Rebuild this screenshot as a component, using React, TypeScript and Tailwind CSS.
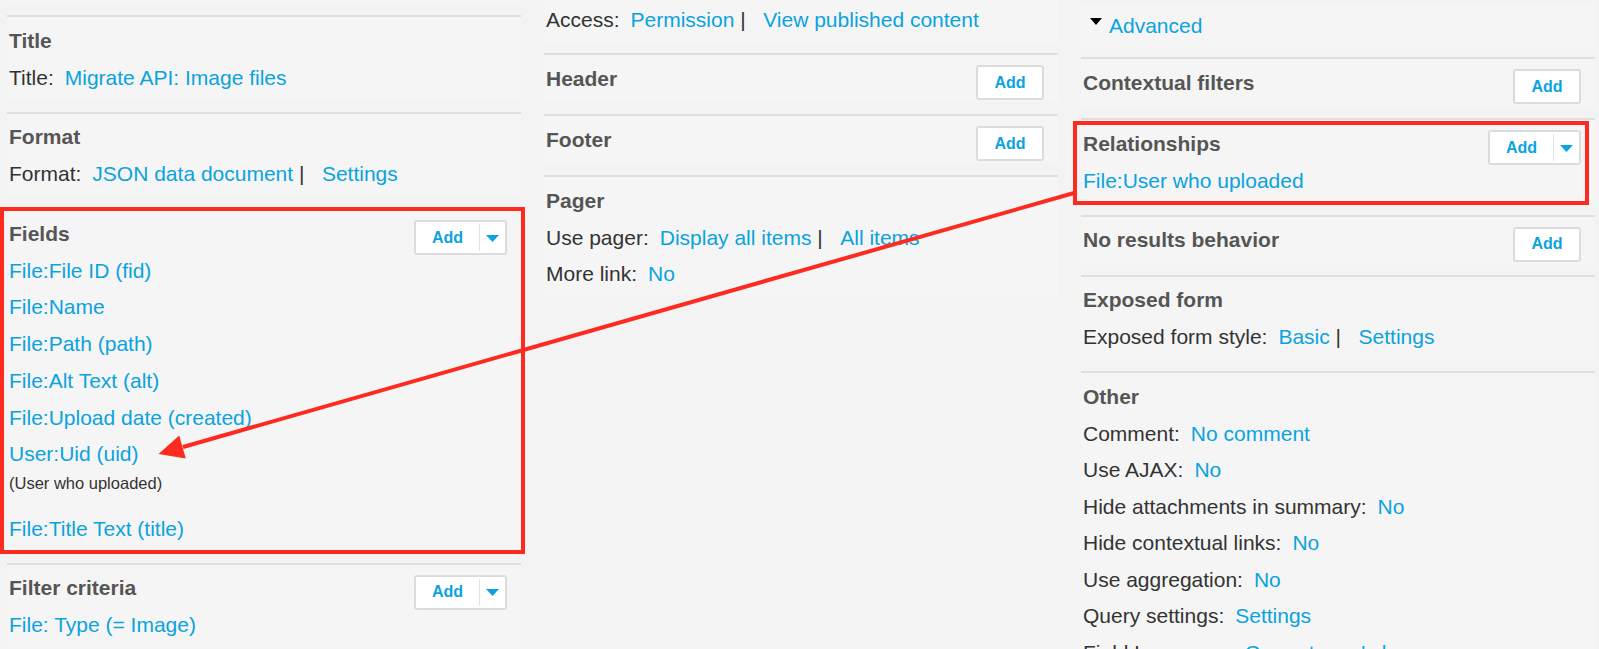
import React from "react";

const BLUE = "text-[#0aa3df]";

function Caret() {
  return (
    <svg width="13" height="7" viewBox="0 0 13 7">
      <polygon points="0,0 13,0 6.5,7" fill="#0aa3df" />
    </svg>
  );
}

function AddButton() {
  return (
    <div className={`mt-[6.5px] flex h-[35px] w-[68px] shrink-0 items-center justify-center rounded-[3px] border-2 border-[#dcdcdc] bg-white text-[16px] font-bold ${BLUE}`}>
      Add
    </div>
  );
}

function SplitButton() {
  return (
    <div className="mt-[6.5px] flex h-[35px] w-[93px] shrink-0 items-stretch rounded-[3px] border-2 border-[#dcdcdc] bg-white">
      <div className={`flex w-[63px] items-center justify-center text-[16px] font-bold ${BLUE}`}>Add</div>
      <div className="my-[2px] w-px bg-[#e3e3e3]" />
      <div className="flex flex-1 items-center justify-center pt-[1px]">
        <Caret />
      </div>
    </div>
  );
}

function Sep() {
  return <span className="text-[#333]">{"\u00a0|\u00a0\u00a0\u00a0"}</span>;
}

function Line({ label, children, lh = "leading-[36.5px]" }: { label?: string; children?: React.ReactNode; lh?: string }) {
  return (
    <div className={`whitespace-nowrap text-[21px] ${lh} text-[#333]`}>
      {label && <span>{label}</span>}
      {label ? <span className="ml-[11px]">{children}</span> : children}
    </div>
  );
}

function L({ children }: { children: React.ReactNode }) {
  return <span className={BLUE}>{children}</span>;
}

function Section({
  title,
  button,
  onlyHeader,
  mb = "mb-[12px]",
  children,
}: {
  title: string;
  button?: "add" | "split";
  onlyHeader?: boolean;
  mb?: string;
  children?: React.ReactNode;
}) {
  return (
    <div
      className={`border-t-2 border-[#dfdfdf] bg-[#f5f5f5] pl-[2px] pr-[14px] pt-[3.5px] ${onlyHeader ? "pb-[4.5px]" : "pb-[3.5px]"} ${mb}`}
    >
      <div className="flex h-[39px] items-start justify-between">
        <div className="whitespace-nowrap text-[21px] font-bold leading-[39px] text-[#555]">{title}</div>
        {button === "add" && <AddButton />}
        {button === "split" && <SplitButton />}
      </div>
      {children}
    </div>
  );
}

export default function App() {
  const fl = "leading-[36.75px]";
  return (
    <div className="relative h-[649px] w-[1599px] overflow-hidden bg-[#f3f3f3] font-['Liberation_Sans',Arial,sans-serif]">
      <div className="ml-[7px] grid grid-cols-[514px_514px_514px] items-start gap-x-[23px]">
        {/* Column 1 */}
        <div>
          <div className="mb-[12px] h-[3px] bg-[#f5f5f5]" />
          <Section title="Title">
            <Line label="Title:">
              <L>Migrate API: Image files</L>
            </Line>
          </Section>
          <Section title="Format">
            <Line label="Format:">
              <L>JSON data document</L>
              <Sep />
              <L>Settings</L>
            </Line>
          </Section>
          <Section title="Fields" button="split">
            <Line lh={fl}><L>File:File ID (fid)</L></Line>
            <Line lh={fl}><L>File:Name</L></Line>
            <Line lh={fl}><L>File:Path (path)</L></Line>
            <Line lh={fl}><L>File:Alt Text (alt)</L></Line>
            <Line lh={fl}><L>File:Upload date (created)</L></Line>
            <Line lh={fl}><L>User:Uid (uid)</L></Line>
            <div className="pb-[17px] text-[16.5px] leading-[20.5px] text-[#333]">(User who uploaded)</div>
            <Line lh={fl}><L>File:Title Text (title)</L></Line>
          </Section>
          <Section title="Filter criteria" button="split">
            <Line><L>File: Type (= Image)</L></Line>
          </Section>
        </div>

        {/* Column 2 */}
        <div>
          <div className="mb-[11.5px] bg-[#f5f5f5] pb-[3.5px] pl-[2px] pt-[1.5px]">
            <Line label="Access:">
              <L>Permission</L>
              <Sep />
              <L>View published content</L>
            </Line>
          </div>
          <Section title="Header" button="add" onlyHeader />
          <Section title="Footer" button="add" onlyHeader />
          <Section title="Pager">
            <Line label="Use pager:">
              <L>Display all items</L>
              <Sep />
              <L>All items</L>
            </Line>
            <Line label="More link:">
              <L>No</L>
            </Line>
          </Section>
        </div>

        {/* Column 3 */}
        <div>
          <div className="mb-[10px] mt-[3px] bg-[#f5f5f5] pb-[3px] pl-[2px] pt-[4.5px]">
            <div className="flex h-[36.5px] items-start whitespace-nowrap text-[21px] leading-[36.5px]">
              <svg className="ml-[7px] mt-[10.5px] mr-[7px]" width="12" height="7" viewBox="0 0 12 7">
                <polygon points="0,0 12,0 6,7" fill="#000" />
              </svg>
              <L>Advanced</L>
            </div>
          </div>
          <Section title="Contextual filters" button="add" onlyHeader />
          <Section title="Relationships" button="split" mb="mb-[12px]">
            <Line><L>File:User who uploaded</L></Line>
          </Section>
          <Section title="No results behavior" button="add" onlyHeader mb="mb-[11px]" />
          <Section title="Exposed form">
            <Line label="Exposed form style:">
              <L>Basic</L>
              <Sep />
              <L>Settings</L>
            </Line>
          </Section>
          <Section title="Other">
            <Line label="Comment:"><L>No comment</L></Line>
            <Line label="Use AJAX:"><L>No</L></Line>
            <Line label="Hide attachments in summary:"><L>No</L></Line>
            <Line label="Hide contextual links:"><L>No</L></Line>
            <Line label="Use aggregation:"><L>No</L></Line>
            <Line label="Query settings:"><L>Settings</L></Line>
            <Line label="Field Language:"><L>Current user's language</L></Line>
          </Section>
        </div>
      </div>

      {/* Annotation overlays */}
      <div className="pointer-events-none absolute left-0 top-[207px] h-[347px] w-[525px] border-4 border-[#fd2b1f]" />
      <div className="pointer-events-none absolute left-[1073px] top-[121px] h-[84px] w-[516px] border-4 border-[#fd2b1f]" />
      <svg className="pointer-events-none absolute left-0 top-0" width="1599" height="649" viewBox="0 0 1599 649">
        <line x1="183" y1="447" x2="1074" y2="193" stroke="#fd2b1f" strokeWidth="4" />
        <polygon points="158.5,454 179.2,435.5 185.8,458.5" fill="#fd2b1f" />
      </svg>
    </div>
  );
}
